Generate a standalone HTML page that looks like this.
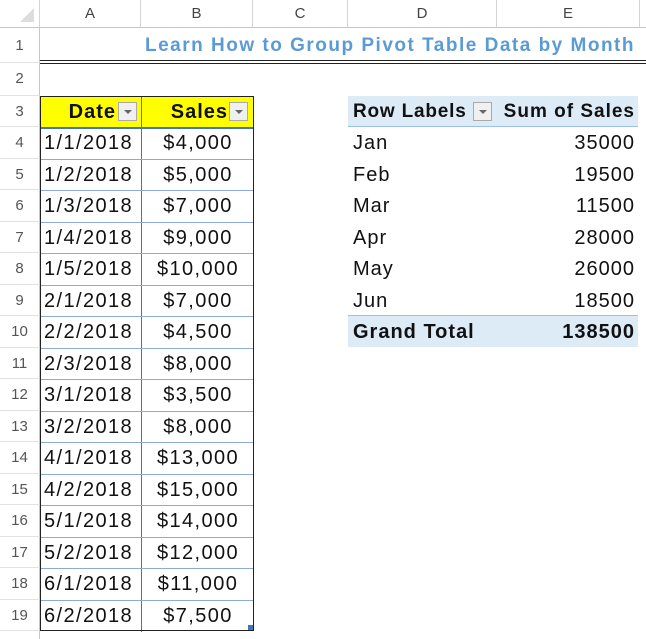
<!DOCTYPE html>
<html><head><style>
body{margin:0;width:646px;height:639px;background:#fff;position:relative;overflow:hidden;font-family:"Liberation Sans",Arial,sans-serif;}
div{position:absolute;box-sizing:border-box;}
.ch{top:0;height:28px;line-height:28px;text-align:center;font-size:15px;color:#444;border-right:1px solid #d4d4d4;border-bottom:1px solid #c6c6c6;}
.rh{left:0;width:40px;text-align:center;font-size:15px;color:#555;border-bottom:1px solid #e2e2e2;border-right:1px solid #c6c6c6;}
.c{font-size:20px;color:#111;white-space:nowrap;letter-spacing:1.4px;line-height:32px;}
.p{letter-spacing:1px;}
.dd{width:19px;height:19px;border:1px solid #aaa;background:#f0f0f0;}
.dd:after{content:"";position:absolute;left:5px;top:7px;border-left:4px solid transparent;border-right:4px solid transparent;border-top:4px solid #666;}
</style></head><body>
<div class="ch" style="left:0;width:40px;background:#fff"><div style="left:20px;top:8px;width:0;height:0;border-left:14px solid transparent;border-bottom:14px solid #ddd"></div></div>
<div class="ch" style="left:40px;width:101px">A</div>
<div class="ch" style="left:141px;width:112px">B</div>
<div class="ch" style="left:253px;width:95px">C</div>
<div class="ch" style="left:348px;width:149px">D</div>
<div class="ch" style="left:497px;width:143px">E</div>
<div class="ch" style="left:640px;width:6px;border-right:none"></div>

<div class="rh" style="top:28px;height:35px;line-height:35px">1</div>
<div class="rh" style="top:63px;height:32.5px;line-height:32px">2</div>
<div class="rh" style="top:95.5px;height:31.5px;line-height:31px">3</div>
<div class="rh" style="top:127px;height:31.5px;line-height:31px">4</div>
<div class="rh" style="top:158.5px;height:31.5px;line-height:31px">5</div>
<div class="rh" style="top:190px;height:31.5px;line-height:31px">6</div>
<div class="rh" style="top:221.5px;height:31.5px;line-height:31px">7</div>
<div class="rh" style="top:253px;height:31.5px;line-height:31px">8</div>
<div class="rh" style="top:284.5px;height:31.5px;line-height:31px">9</div>
<div class="rh" style="top:316px;height:31.5px;line-height:31px">10</div>
<div class="rh" style="top:347.5px;height:31.5px;line-height:31px">11</div>
<div class="rh" style="top:379px;height:31.5px;line-height:31px">12</div>
<div class="rh" style="top:410.5px;height:31.5px;line-height:31px">13</div>
<div class="rh" style="top:442px;height:31.5px;line-height:31px">14</div>
<div class="rh" style="top:473.5px;height:31.5px;line-height:31px">15</div>
<div class="rh" style="top:505px;height:31.5px;line-height:31px">16</div>
<div class="rh" style="top:536.5px;height:31.5px;line-height:31px">17</div>
<div class="rh" style="top:568px;height:31.5px;line-height:31px">18</div>
<div class="rh" style="top:599.5px;height:31.5px;line-height:31px">19</div>
<div class="rh" style="top:631px;height:8px;border-bottom:none"></div>

<!-- title -->
<div class="c" style="left:40px;width:595px;top:30px;text-align:right;color:#5b9bd5;font-weight:bold;font-size:19px;letter-spacing:1.5px">Learn How to Group Pivot Table Data by Month</div>
<div style="left:40px;width:606px;top:60px;height:4px;border-top:1px solid #222;border-bottom:1px solid #222"></div>

<!-- data table -->
<div style="left:40px;top:95.5px;width:214px;height:31.5px;background:#ffff00"></div>
<div class="c" style="left:40px;width:76px;top:95.5px;text-align:right;font-weight:bold;letter-spacing:1px">Date</div>
<div class="dd" style="left:118px;top:102px"></div>
<div class="c" style="left:141px;width:87px;top:95.5px;text-align:right;font-weight:bold;letter-spacing:1px">Sales</div>
<div class="dd" style="left:229px;top:102px"></div>

<div style="left:40px;top:127px;width:214px;height:504px;border-top:2px solid #4472c4"></div>
<div style="left:141px;top:95.5px;width:1px;height:536px;background:#4472c4"></div>
<div style="left:40px;top:158.5px;width:214px;height:1px;background:#8eaadb"></div>
<div style="left:40px;top:190px;width:214px;height:1px;background:#8eaadb"></div>
<div style="left:40px;top:221.5px;width:214px;height:1px;background:#8eaadb"></div>
<div style="left:40px;top:253px;width:214px;height:1px;background:#8eaadb"></div>
<div style="left:40px;top:284.5px;width:214px;height:1px;background:#8eaadb"></div>
<div style="left:40px;top:316px;width:214px;height:1px;background:#8eaadb"></div>
<div style="left:40px;top:347.5px;width:214px;height:1px;background:#8eaadb"></div>
<div style="left:40px;top:379px;width:214px;height:1px;background:#8eaadb"></div>
<div style="left:40px;top:410.5px;width:214px;height:1px;background:#8eaadb"></div>
<div style="left:40px;top:442px;width:214px;height:1px;background:#8eaadb"></div>
<div style="left:40px;top:473.5px;width:214px;height:1px;background:#8eaadb"></div>
<div style="left:40px;top:505px;width:214px;height:1px;background:#8eaadb"></div>
<div style="left:40px;top:536.5px;width:214px;height:1px;background:#8eaadb"></div>
<div style="left:40px;top:568px;width:214px;height:1px;background:#8eaadb"></div>
<div style="left:40px;top:599.5px;width:214px;height:1px;background:#8eaadb"></div>
<div style="left:40px;top:95.5px;width:214px;height:535.5px;border:1.5px solid #222"></div>
<div style="left:248px;top:625px;width:5px;height:5px;background:#4472c4"></div>

<div class="c" style="left:44px;top:127px">1/1/2018</div><div class="c" style="left:142px;width:112px;text-align:center;top:127px">$4,000</div>
<div class="c" style="left:44px;top:158.5px">1/2/2018</div><div class="c" style="left:142px;width:112px;text-align:center;top:158.5px">$5,000</div>
<div class="c" style="left:44px;top:190px">1/3/2018</div><div class="c" style="left:142px;width:112px;text-align:center;top:190px">$7,000</div>
<div class="c" style="left:44px;top:221.5px">1/4/2018</div><div class="c" style="left:142px;width:112px;text-align:center;top:221.5px">$9,000</div>
<div class="c" style="left:44px;top:253px">1/5/2018</div><div class="c" style="left:142px;width:112px;text-align:center;top:253px">$10,000</div>
<div class="c" style="left:44px;top:284.5px">2/1/2018</div><div class="c" style="left:142px;width:112px;text-align:center;top:284.5px">$7,000</div>
<div class="c" style="left:44px;top:316px">2/2/2018</div><div class="c" style="left:142px;width:112px;text-align:center;top:316px">$4,500</div>
<div class="c" style="left:44px;top:347.5px">2/3/2018</div><div class="c" style="left:142px;width:112px;text-align:center;top:347.5px">$8,000</div>
<div class="c" style="left:44px;top:379px">3/1/2018</div><div class="c" style="left:142px;width:112px;text-align:center;top:379px">$3,500</div>
<div class="c" style="left:44px;top:410.5px">3/2/2018</div><div class="c" style="left:142px;width:112px;text-align:center;top:410.5px">$8,000</div>
<div class="c" style="left:44px;top:442px">4/1/2018</div><div class="c" style="left:142px;width:112px;text-align:center;top:442px">$13,000</div>
<div class="c" style="left:44px;top:473.5px">4/2/2018</div><div class="c" style="left:142px;width:112px;text-align:center;top:473.5px">$15,000</div>
<div class="c" style="left:44px;top:505px">5/1/2018</div><div class="c" style="left:142px;width:112px;text-align:center;top:505px">$14,000</div>
<div class="c" style="left:44px;top:536.5px">5/2/2018</div><div class="c" style="left:142px;width:112px;text-align:center;top:536.5px">$12,000</div>
<div class="c" style="left:44px;top:568px">6/1/2018</div><div class="c" style="left:142px;width:112px;text-align:center;top:568px">$11,000</div>
<div class="c" style="left:44px;top:599.5px">6/2/2018</div><div class="c" style="left:142px;width:112px;text-align:center;top:599.5px">$7,500</div>

<!-- pivot -->
<div style="left:348px;top:95.5px;width:290px;height:31.5px;background:#ddebf7;border-bottom:1.5px solid #9bc2e6"></div>
<div class="c p" style="left:353px;top:95.5px;font-weight:bold;font-size:19px;letter-spacing:0.8px">Row Labels</div>
<div class="dd" style="left:473px;top:102px"></div>
<div class="c p" style="left:480px;width:155px;text-align:right;top:95.5px;font-weight:bold;font-size:19px">Sum of Sales</div>

<div class="c p" style="left:353px;top:127px">Jan</div><div class="c p" style="left:497px;width:138px;text-align:right;top:127px">35000</div>
<div class="c p" style="left:353px;top:158.5px">Feb</div><div class="c p" style="left:497px;width:138px;text-align:right;top:158.5px">19500</div>
<div class="c p" style="left:353px;top:190px">Mar</div><div class="c p" style="left:497px;width:138px;text-align:right;top:190px">11500</div>
<div class="c p" style="left:353px;top:221.5px">Apr</div><div class="c p" style="left:497px;width:138px;text-align:right;top:221.5px">28000</div>
<div class="c p" style="left:353px;top:253px">May</div><div class="c p" style="left:497px;width:138px;text-align:right;top:253px">26000</div>
<div class="c p" style="left:353px;top:284.5px">Jun</div><div class="c p" style="left:497px;width:138px;text-align:right;top:284.5px">18500</div>
<div style="left:348px;top:315px;width:290px;height:32px;background:#ddebf7;border-top:1.5px solid #9bc2e6"></div>
<div class="c p" style="left:353px;top:316px;font-weight:bold">Grand Total</div><div class="c p" style="left:497px;width:138px;text-align:right;top:316px;font-weight:bold">138500</div>
</body></html>
